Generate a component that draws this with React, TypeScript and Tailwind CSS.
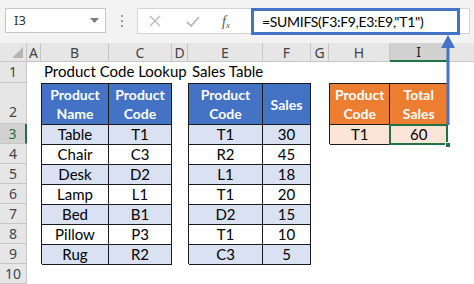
const colLetters = ["A", "B", "C", "D", "E", "F", "G", "H", "I"];
const rowNums = [1, 2, 3, 4, 5, 6, 7, 8, 9, 10];

const products = [
  ["Table", "T1"],
  ["Chair", "C3"],
  ["Desk", "D2"],
  ["Lamp", "L1"],
  ["Bed", "B1"],
  ["Pillow", "P3"],
  ["Rug", "R2"],
];

const sales = [
  ["T1", "30"],
  ["R2", "45"],
  ["L1", "18"],
  ["T1", "20"],
  ["D2", "15"],
  ["T1", "10"],
  ["C3", "5"],
];

const cellFont = "font-['Lato','Liberation_Sans',sans-serif]";
const uiFont = "font-['Noto_Sans','Liberation_Sans',sans-serif]";

function FormulaBar() {
  return (
    <div className="flex h-[43px] items-start bg-[#f3f3f3] pt-[8px]">
      <div className="ml-[5px] flex h-[25px] w-[101px] items-center justify-between border border-[#c6c6c6] bg-white pl-[8px] pr-[6px]">
        <span className={`${uiFont} text-[13px] text-[#333]`}>I3</span>
        <svg width="9" height="5" viewBox="0 0 9 5">
          <path d="M0 0 L9 0 L4.5 5 Z" fill="#7a7a7a" />
        </svg>
      </div>
      <div className="flex w-[31px] flex-col items-center gap-[3px] pt-[7px]">
        <span className="h-[2px] w-[2px] bg-[#9a9a9a]" />
        <span className="h-[2px] w-[2px] bg-[#9a9a9a]" />
        <span className="h-[2px] w-[2px] bg-[#9a9a9a]" />
      </div>
      <div className="flex h-[26px] flex-1 items-center border border-[#d4d4d4] bg-white">
        <div className="flex w-[113px] items-center">
          <svg className="ml-[11px]" width="12" height="12" viewBox="0 0 12 12">
            <path d="M1 1 L11 11 M11 1 L1 11" stroke="#b8b8b8" strokeWidth="1.4" />
          </svg>
          <svg className="ml-[25px]" width="14" height="11" viewBox="0 0 14 11">
            <path d="M1 6 L5 10 L13 1" stroke="#b8b8b8" strokeWidth="1.8" fill="none" />
          </svg>
          <span className="ml-[22px] font-['Liberation_Serif',serif] text-[14px] italic text-[#555]">
            f<sub className="text-[9px]">x</sub>
          </span>
        </div>
        <div className="flex h-[27px] w-[209px] items-center border-[3px] border-[#4472c4] pl-[8px]">
          <span className={`${cellFont} text-[14px] tracking-[-0.3px] text-black`}>
            =SUMIFS(F3:F9,E3:E9,"T1")
          </span>
        </div>
      </div>
      <div className="w-[4px]" />
    </div>
  );
}

function ProductTable() {
  return (
    <div className="col-span-2 col-start-3 row-span-8 row-start-3 grid grid-cols-[67fr_63fr] grid-rows-[41px_repeat(7,20px)] border-l border-t border-[#1a1a1a]">
      {["Product\nName", "Product\nCode"].map((h) => (
        <div
          key={h}
          className="flex items-center justify-center whitespace-pre border-b border-r border-[#1a1a1a] bg-[#4472c4] text-center text-[14px] font-bold leading-[19px] text-white"
        >
          {h}
        </div>
      ))}
      {products.map((row, i) =>
        row.map((v, j) => (
          <div
            key={`${i}-${j}`}
            className={`flex items-center justify-center border-b border-r border-[#1a1a1a] text-[15px] text-black ${
              i % 2 === 0 ? "bg-[#d9e1f2]" : "bg-white"
            }`}
          >
            {v}
          </div>
        ))
      )}
    </div>
  );
}

function SalesTable() {
  return (
    <div className="col-span-2 col-start-6 row-span-8 row-start-3 grid grid-cols-[74fr_48fr] grid-rows-[41px_repeat(7,20px)] border-l border-t border-[#1a1a1a]">
      {["Product\nCode", "Sales"].map((h) => (
        <div
          key={h}
          className="flex items-center justify-center whitespace-pre border-b border-r border-[#1a1a1a] bg-[#4472c4] text-center text-[14px] font-bold leading-[19px] text-white"
        >
          {h}
        </div>
      ))}
      {sales.map((row, i) =>
        row.map((v, j) => (
          <div
            key={`${i}-${j}`}
            className={`flex items-center justify-center border-b border-r border-[#1a1a1a] text-[15px] text-black ${
              i % 2 === 0 ? "bg-[#d9e1f2]" : "bg-white"
            }`}
          >
            {v}
          </div>
        ))
      )}
    </div>
  );
}

function ResultTable() {
  return (
    <div className="col-span-2 col-start-9 row-span-2 row-start-3 grid grid-cols-[61fr_58fr] grid-rows-[41px_20px] border-l border-t border-[#1a1a1a]">
      {["Product\nCode", "Total\nSales"].map((h) => (
        <div
          key={h}
          className="flex items-center justify-center whitespace-pre border-b border-r border-[#1a1a1a] bg-[#ed7d31] text-center text-[14px] font-bold leading-[19px] text-white"
        >
          {h}
        </div>
      ))}
      <div className="flex items-center justify-center border-b border-r border-[#1a1a1a] bg-[#fce4d6] text-[15px] text-black">
        T1
      </div>
      <div className="relative flex items-center justify-center border-b border-r border-[#1a1a1a] bg-[#fce4d6] text-[15px] text-black">
        60
        <div className="absolute -left-[1px] -top-[1px] bottom-[-1px] right-[-1px] border-2 border-[#217346]" />
        <div className="absolute bottom-[-4px] right-[-4px] h-[6px] w-[6px] border border-white bg-[#217346]" />
      </div>
    </div>
  );
}

export default function App() {
  return (
    <div className={`relative h-[284px] w-[474px] overflow-hidden bg-white ${cellFont}`}>
      <FormulaBar />
      <div className="grid grid-cols-[27px_14px_68px_63px_16px_75px_48px_18px_61px_58px_1fr] grid-rows-[19px_21px_41px_repeat(8,20px)]">
        {/* corner */}
        <div className="relative col-start-1 row-start-1 border-b border-r border-[#c6c6c6] bg-[#e6e6e6]">
          <svg className="absolute bottom-[3px] right-[3px]" width="11" height="11" viewBox="0 0 11 11">
            <path d="M11 0 L11 11 L0 11 Z" fill="#b5b5b5" />
          </svg>
        </div>
        {colLetters.map((c, i) => (
          <div
            key={c}
            className={`row-start-1 flex items-center justify-center border-r text-[14px] ${uiFont} ${
              c === "I"
                ? "border-b-2 border-b-[#217346] border-r-[#c6c6c6] bg-[#d2d2d2] text-[#222]"
                : "border-b border-[#c6c6c6] bg-[#e6e6e6] text-[#444]"
            }`}
            style={{ gridColumnStart: i + 2 }}
          >
            {c}
          </div>
        ))}
        <div className="col-start-11 row-start-1 border-b border-[#c6c6c6] bg-[#e6e6e6]" />
        {rowNums.map((n) => (
          <div
            key={n}
            className={`col-start-1 flex justify-center border-b pb-[1px] text-[14px] ${uiFont} ${
              n === 2 ? "items-end" : "items-center"
            } ${
              n === 3
                ? "border-r-2 border-b-[#c6c6c6] border-r-[#217346] bg-[#d2d2d2] text-[#217346]"
                : "border-r border-[#c6c6c6] bg-[#e6e6e6] text-[#444]"
            }`}
            style={{ gridRowStart: n + 1 }}
          >
            {n}
          </div>
        ))}
        <div className="col-span-3 col-start-3 row-start-2 flex items-end whitespace-nowrap pb-[1px] pl-[3px] text-[15px] text-black">
          Product Code Lookup
        </div>
        <div className="col-span-3 col-start-6 row-start-2 flex items-end whitespace-nowrap pb-[1px] pl-[4px] text-[15px] text-black">
          Sales Table
        </div>
        <ProductTable />
        <SalesTable />
        <ResultTable />
      </div>
      {/* arrow from I3 to the formula */}
      <svg className="absolute left-[440px] top-[34px]" width="16" height="92" viewBox="0 0 16 92">
        <path d="M8 12 L8 91" stroke="#4472c4" strokeWidth="3" />
        <path d="M8 1 L15 14 L1 14 Z" fill="#4472c4" />
      </svg>
    </div>
  );
}
